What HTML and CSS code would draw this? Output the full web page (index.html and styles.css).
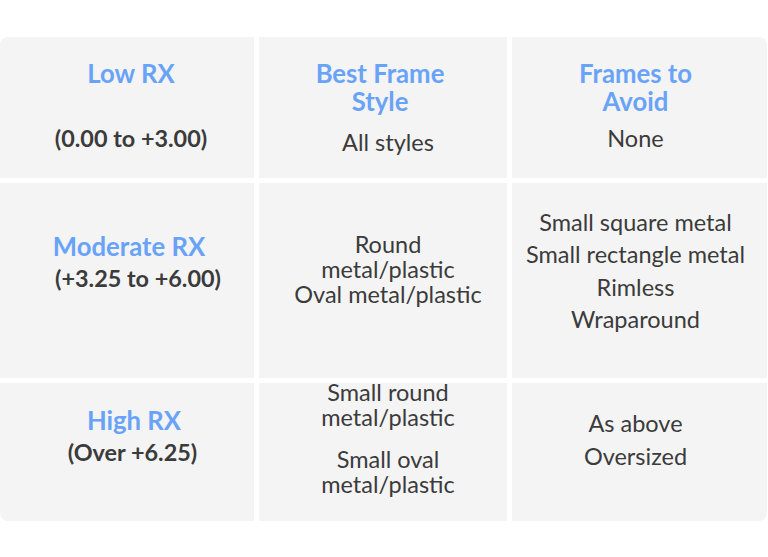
FILE: index.html
```html
<!DOCTYPE html>
<html lang="en">
<head>
<meta charset="utf-8">
<title>Frame styles by prescription</title>
<link rel="stylesheet" href="styles.css">
</head>
<body>
<div class="page">
  <div class="table">
    <div class="cell c1 r1 tl">
      <div class="title">Low RX</div>
      <div class="range r1c1-body">(0.00 to +3.00)</div>
    </div>
    <div class="cell c2 r1">
      <div class="title">Best Frame<br>Style</div>
      <div class="text r1c2-body">All styles</div>
    </div>
    <div class="cell c3 r1 tr">
      <div class="title">Frames to<br>Avoid</div>
      <div class="text r1c3-body">None</div>
    </div>

    <div class="cell c1 r2 r2c1">
      <div class="title">Moderate RX</div>
      <div class="range tight">(+3.25 to +6.00)</div>
    </div>
    <div class="cell c2 r2 r2c2">
      <div class="text">Round<br>metal/plastic<br>Oval metal/plastic</div>
    </div>
    <div class="cell c3 r2 r2c3">
      <div class="text loose">Small square metal<br>Small rectangle metal<br>Rimless<br>Wraparound</div>
    </div>

    <div class="cell c1 r3 r3c1 bl">
      <div class="title">High RX</div>
      <div class="range tight">(Over +6.25)</div>
    </div>
    <div class="cell c2 r3 r3c2">
      <div class="text first">Small round<br>metal/plastic</div>
      <div class="text second">Small oval<br>metal/plastic</div>
    </div>
    <div class="cell c3 r3 r3c3 br">
      <div class="text loose">As above<br>Oversized</div>
    </div>
  </div>
</div>
</body>
</html>
```

FILE: styles.css
```css
* { box-sizing: border-box; }
html, body { margin: 0; padding: 0; background: #ffffff; }
body {
  font-family: Lato, "Open Sans", sans-serif;
  color: #3b3b3b;
  width: 768px;
  height: 557px;
  overflow: hidden;
}
.page { padding-top: 37px; }
.table {
  display: grid;
  grid-template-columns: 254px 248px 255px;
  grid-template-rows: 141px 195px 138px;
  gap: 5px;
}
.cell {
  background: #f4f4f4;
  display: flex;
  flex-direction: column;
  align-items: center;
  text-align: center;
  white-space: nowrap;
}
.tl { border-top-left-radius: 8px; }
.tr { border-top-right-radius: 8px; }
.bl { border-bottom-left-radius: 8px; }
.br { border-bottom-right-radius: 8px; }

.c1 { padding-left: 8px; }
.c2 { padding-left: 10px; }
.c3 { padding-right: 8px; }
.c2 .title { margin-right: 16px; }

.title {
  font-weight: 700;
  font-size: 25.7px;
  line-height: 28px;
  color: #69a3f8;
}
.range {
  font-weight: 700;
  font-size: 23.4px;
  line-height: 25px;
  color: #3b3b3b;
}
.text {
  font-size: 23.5px;
  line-height: 25px;
  color: #3b3b3b;
}
.text.loose { line-height: 32.5px; }

.r1 { padding-top: 22px; }
.r1c1-body { margin-top: 38.5px; }
.r1c2-body { margin-top: 14.5px; }
.r1c3-body { margin-top: 10.5px; }

.r2c1 { padding-top: 49px; }
.r2c1 .title { margin-right: 4px; }
.r2c1 .range { margin-left: 14px; }
.tight { margin-top: 5.5px; }
.r2c2 { padding-top: 48.5px; }
.r2c3 { padding-top: 22.5px; }

.r3c1 { padding-top: 23px; }
.r3c1 .title { margin-left: 6px; }
.r3c1 .range { margin-left: 3px; }
.r3c2 { padding-top: 0; }
.r3c2 .first { margin-top: -3.5px; }
.r3c2 .second { margin-top: 17px; }
.r3c3 { padding-top: 24px; }
```
